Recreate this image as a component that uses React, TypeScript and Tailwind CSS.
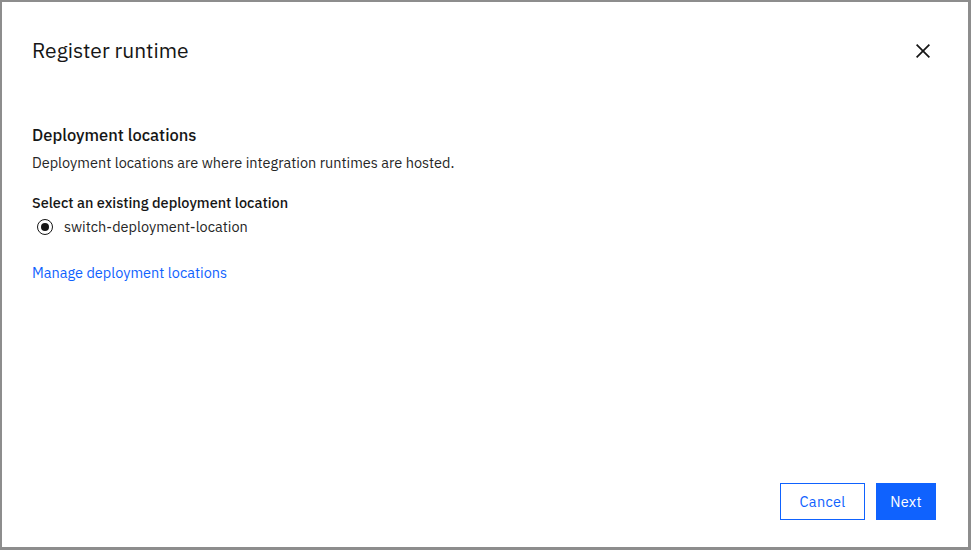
import { useState } from 'react'

const FONT = { fontFamily: '"IBM Plex Sans", Inter, "Noto Sans", sans-serif' }

function CloseIcon() {
  return (
    <svg width="28" height="28" viewBox="0 0 32 32" fill="currentColor" aria-hidden="true">
      <path d="M24 9.4 22.6 8 16 14.6 9.4 8 8 9.4 14.6 16 8 22.6 9.4 24 16 17.4 22.6 24 24 22.6 17.4 16 24 9.4z" />
    </svg>
  )
}

export default function App() {
  const [location, setLocation] = useState('switch-deployment-location')

  return (
    <div
      style={FONT}
      className="box-border flex h-[550px] w-[971px] flex-col border-t-2 border-l-2 border-r-[3px] border-b-[3px] border-[#8d8d8d] bg-white text-[#161616]"
    >
      <div className="flex items-start justify-between pt-[34px] pl-[30px] pr-[29px]">
        <h2 className="text-[21px] leading-[28px] font-normal">Register runtime</h2>
        <button type="button" className="-mt-[1px] flex h-8 w-8 items-center justify-center text-[#161616]">
          <CloseIcon />
        </button>
      </div>

      <div className="flex flex-1 flex-col pl-[30px]">
        <h3 className="mt-[56px] text-[16.5px] leading-6 font-medium">Deployment locations</h3>
        <p className="mt-[6px] text-[14.5px] leading-5 text-[#262626]">
          Deployment locations are where integration runtimes are hosted.
        </p>

        <p className="mt-5 text-[14.5px] leading-5 font-medium">Select an existing deployment location</p>
        <label className="mt-[4px] flex cursor-pointer items-center gap-[11px] pl-[5px] text-[14.5px] leading-5 text-[#262626]">
          <input
            type="radio"
            className="sr-only"
            checked={location === 'switch-deployment-location'}
            onChange={() => setLocation('switch-deployment-location')}
          />
          <span className="flex h-4 w-4 items-center justify-center rounded-full border border-[#161616]">
            <span className="h-2 w-2 rounded-full bg-[#161616]" />
          </span>
          switch-deployment-location
        </label>

        <a href="#" className="mt-[26px] self-start text-[14.5px] leading-5 text-[#0f62fe]">
          Manage deployment locations
        </a>

        <div className="flex-1" />

        <div className="flex justify-end gap-[11px] pr-[32px] pb-[27px]">
          <button
            type="button"
            className="h-[37px] w-[85px] border border-[#0f62fe] text-[14.5px] tracking-[0.3px] text-[#0f62fe]"
          >
            Cancel
          </button>
          <button type="button" className="h-[37px] w-[60px] bg-[#0f62fe] text-[14.5px] tracking-[0.3px] text-white">
            Next
          </button>
        </div>
      </div>
    </div>
  )
}
